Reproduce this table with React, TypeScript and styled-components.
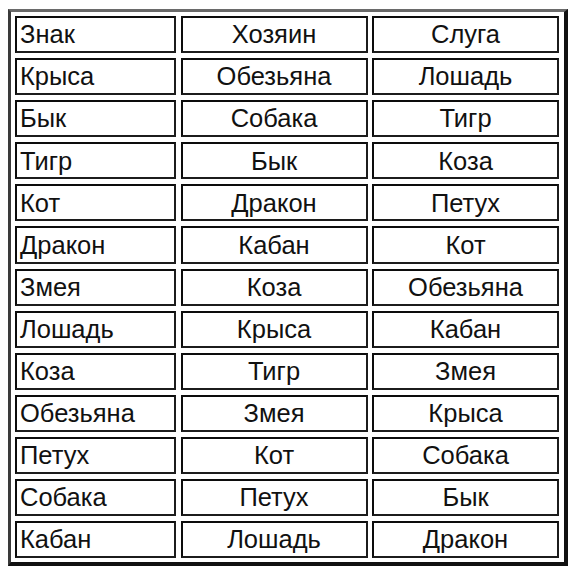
import React from 'react';
import styled, { createGlobalStyle } from 'styled-components';

const GlobalStyle = createGlobalStyle`
  html, body {
    margin: 0;
    padding: 0;
    background: #ffffff;
  }
`;

const Page = styled.div`
  padding: 9px 0 0 8px;
`;

const Table = styled.div`
  display: grid;
  grid-template-columns: 161px 187px 187px;
  grid-auto-rows: 37.1px;
  column-gap: 4.5px;
  row-gap: 5px;
  width: 545px;
  padding: 4px;
  border-top: 3px solid #6a6a6a;
  border-left: 3px solid #3a3a3a;
  border-right: 4px solid #111111;
  border-bottom: 4px solid #111111;
  box-sizing: content-box;
  font-family: 'Liberation Sans', Arial, sans-serif;
  font-size: 25.5px;
  color: #111111;
`;

const Cell = styled.div<{ $align: 'left' | 'center' }>`
  display: flex;
  align-items: center;
  justify-content: ${(p) => (p.$align === 'left' ? 'flex-start' : 'center')};
  padding: 1px 3px 0 3px;
  border: 2px solid #1c1c1c;
  border-top-color: #0c0c0c;
  border-left-color: #0c0c0c;
  box-sizing: border-box;
  white-space: nowrap;
  line-height: 1;
`;

const rows: [string, string, string][] = [
  ['Знак', 'Хозяин', 'Слуга'],
  ['Крыса', 'Обезьяна', 'Лошадь'],
  ['Бык', 'Собака', 'Тигр'],
  ['Тигр', 'Бык', 'Коза'],
  ['Кот', 'Дракон', 'Петух'],
  ['Дракон', 'Кабан', 'Кот'],
  ['Змея', 'Коза', 'Обезьяна'],
  ['Лошадь', 'Крыса', 'Кабан'],
  ['Коза', 'Тигр', 'Змея'],
  ['Обезьяна', 'Змея', 'Крыса'],
  ['Петух', 'Кот', 'Собака'],
  ['Собака', 'Петух', 'Бык'],
  ['Кабан', 'Лошадь', 'Дракон'],
];

export default function App() {
  return (
    <>
      <GlobalStyle />
      <Page>
        <Table>
          {rows.map((row, i) => (
            <React.Fragment key={i}>
              <Cell $align="left">{row[0]}</Cell>
              <Cell $align="center">{row[1]}</Cell>
              <Cell $align="center">{row[2]}</Cell>
            </React.Fragment>
          ))}
        </Table>
      </Page>
    </>
  );
}
